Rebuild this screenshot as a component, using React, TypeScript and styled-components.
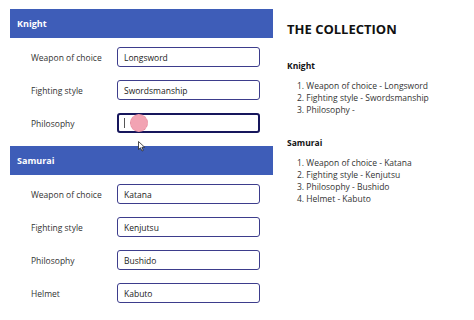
import React from "react";
import styled, { createGlobalStyle } from "styled-components";

type Field = { label: string; value: string; focused?: boolean };
type Section = { title: string; fields: Field[] };

const sections: Section[] = [
  {
    title: "Knight",
    fields: [
      { label: "Weapon of choice", value: "Longsword" },
      { label: "Fighting style", value: "Swordsmanship" },
      { label: "Philosophy", value: "", focused: true },
    ],
  },
  {
    title: "Samurai",
    fields: [
      { label: "Weapon of choice", value: "Katana" },
      { label: "Fighting style", value: "Kenjutsu" },
      { label: "Philosophy", value: "Bushido" },
      { label: "Helmet", value: "Kabuto" },
    ],
  },
];

const Global = createGlobalStyle`
  html, body { margin: 0; padding: 0; background: #ffffff; }
  body { font-family: "Open Sans", "Noto Sans", sans-serif; color: #222; }
`;

const Page = styled.div`
  display: flex;
  width: 474px;
  height: 320px;
  overflow: hidden;
  position: relative;
`;

const FormColumn = styled.div`
  width: 263px;
  padding: 9px 0 0 10px;
  display: flex;
  flex-direction: column;
`;

const Header = styled.div`
  height: 29px;
  background: #3e5db8;
  color: #fff;
  font-weight: 700;
  font-size: 9px;
  display: flex;
  align-items: center;
  padding-left: 7px;
`;

const Fields = styled.div`
  display: flex;
  flex-direction: column;
  gap: 13px;
  padding: 9px 0 13px 21px;
`;

const Row = styled.div`
  display: flex;
  align-items: center;
  height: 20px;
`;

const Label = styled.div`
  width: 86px;
  font-size: 8.5px;
  color: #333;
`;

const Input = styled.div<{ $focused?: boolean }>`
  position: relative;
  box-sizing: border-box;
  width: 143px;
  height: 20px;
  border: ${(p) => (p.$focused ? "2px solid #16165c" : "1px solid #3d3d8c")};
  border-radius: 3px;
  padding-left: ${(p) => (p.$focused ? "5px" : "6px")};
  display: flex;
  align-items: center;
  font-size: 8.5px;
  color: #222;
`;

const Caret = styled.span`
  width: 1px;
  height: 10px;
  background: #555;
`;

const Tap = styled.span`
  position: absolute;
  left: 11px;
  top: 50%;
  width: 18px;
  height: 18px;
  margin-top: -9px;
  border-radius: 50%;
  background: #f2a3b3;
  border: 1px dashed #e58c9e;
  box-sizing: border-box;
`;

const Pointer = styled.svg`
  position: absolute;
  left: 138px;
  top: 141px;
`;

const Summary = styled.div`
  padding: 20px 0 0 14px;
`;

const Title = styled.h1`
  margin: 0 0 22px;
  font-size: 13px;
  font-weight: 700;
  color: #111;
`;

const Group = styled.div`
  margin-bottom: 21px;
`;

const GroupTitle = styled.div`
  font-size: 8.5px;
  font-weight: 700;
  color: #111;
  margin-bottom: 9px;
`;

const List = styled.ol`
  margin: 0;
  padding: 0 0 0 10px;
  list-style-position: inside;
  font-size: 8.5px;
  line-height: 12px;
  color: #333;
`;

export default function App() {
  return (
    <Page>
      <Global />
      <FormColumn>
        {sections.map((s) => (
          <div key={s.title}>
            <Header>{s.title}</Header>
            <Fields>
              {s.fields.map((f) => (
                <Row key={f.label}>
                  <Label>{f.label}</Label>
                  <Input $focused={f.focused}>
                    {f.focused ? (
                      <>
                        <Caret />
                        <Tap />
                      </>
                    ) : (
                      f.value
                    )}
                  </Input>
                </Row>
              ))}
            </Fields>
          </div>
        ))}
      </FormColumn>
      <Summary>
        <Title>THE COLLECTION</Title>
        {sections.map((s) => (
          <Group key={s.title}>
            <GroupTitle>{s.title}</GroupTitle>
            <List>
              {s.fields.map((f) => (
                <li key={f.label}>
                  {f.label} - {f.value}
                </li>
              ))}
            </List>
          </Group>
        ))}
      </Summary>
      <Pointer width="8" height="11" viewBox="0 0 8 11">
        <path d="M0.5 0.5 L0.5 8.5 L2.5 6.8 L4 10 L5.3 9.4 L3.9 6.3 L6.6 6.2 Z" fill="#fff" stroke="#222" strokeWidth="0.8" />
      </Pointer>
    </Page>
  );
}
